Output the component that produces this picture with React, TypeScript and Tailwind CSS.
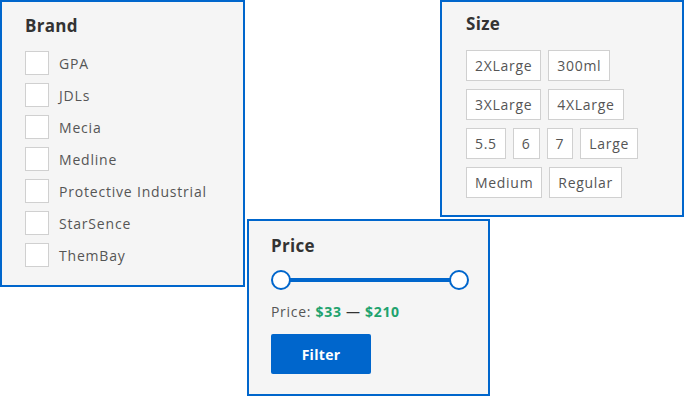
import React from 'react';

const brands = ['GPA', 'JDLs', 'Mecia', 'Medline', 'Protective Industrial', 'StarSence', 'ThemBay'];

const sizeRows = [
  ['2XLarge', '300ml'],
  ['3XLarge', '4XLarge'],
  ['5.5', '6', '7', 'Large'],
  ['Medium', 'Regular'],
];

const font = { fontFamily: '"Open Sans", "Liberation Sans", sans-serif' };

export default function App() {
  return (
    <div
      className="w-[684px] h-[398px] bg-white grid grid-cols-[247px_193px_50px_194px] grid-rows-[219px_68px_auto] overflow-hidden"
      style={font}
    >
      {/* Brand */}
      <section className="col-start-1 row-start-1 row-span-2 w-[245px] h-[287px] border-2 border-[#0066cc] bg-[#f5f5f5] pl-[23px] pt-[12px]">
        <h3 className="text-[17px] font-bold text-[#333] leading-[24px] tracking-[0.3px]">Brand</h3>
        <ul className="mt-[13px] flex flex-col gap-[8px]">
          {brands.map((b) => (
            <li key={b} className="flex items-center gap-[10px] h-[24px]">
              <span className="w-[24px] h-[24px] bg-white border border-[#d0d0d0] shrink-0" />
              <span className="text-[14px] text-[#555] tracking-[0.8px]">{b}</span>
            </li>
          ))}
        </ul>
      </section>

      {/* Size */}
      <section className="col-start-3 col-span-2 row-start-1 self-start w-[244px] h-[217px] border-2 border-[#0066cc] bg-[#f5f5f5] pl-[24px] pt-[10px]">
        <h3 className="text-[17px] font-bold text-[#333] leading-[24px] tracking-[0.3px]">Size</h3>
        <div className="mt-[14px] flex flex-col gap-[8px]">
          {sizeRows.map((row, i) => (
            <div key={i} className="flex gap-[7px]">
              {row.map((s) => (
                <span
                  key={s}
                  className="h-[31px] px-[8px] flex items-center bg-white border border-[#d0d0d0] text-[14px] text-[#555] tracking-[0.7px]"
                >
                  {s}
                </span>
              ))}
            </div>
          ))}
        </div>
      </section>

      {/* Price */}
      <section className="col-start-2 col-span-2 row-start-2 row-span-2 self-start w-[243px] h-[177px] border-2 border-[#0066cc] bg-[#f5f5f5] pl-[22px] pr-[19px] pt-[13px]">
        <h3 className="text-[17px] font-bold text-[#333] leading-[24px] tracking-[0.3px]">Price</h3>
        <div className="relative mt-[12px] h-[20px] w-[198px]">
          <div className="absolute left-[10px] right-[10px] top-[8px] h-[4px] bg-[#0066cc]" />
          <span className="absolute left-0 top-0 w-[20px] h-[20px] rounded-full bg-white border-2 border-[#0066cc]" />
          <span className="absolute right-0 top-0 w-[20px] h-[20px] rounded-full bg-white border-2 border-[#0066cc]" />
        </div>
        <p className="mt-[12px] text-[14px] leading-[20px] text-[#555] tracking-[0.7px]">
          Price: <span className="font-bold text-[#1fa36e]">$33</span>{' '}
          <span className="text-[#333]">—</span>{' '}
          <span className="font-bold text-[#1fa36e]">$210</span>
        </p>
        <button className="mt-[12px] w-[100px] h-[40px] rounded-[2px] bg-[#0066cc] text-white text-[14px] font-bold tracking-[0.3px]">
          Filter
        </button>
      </section>
    </div>
  );
}
